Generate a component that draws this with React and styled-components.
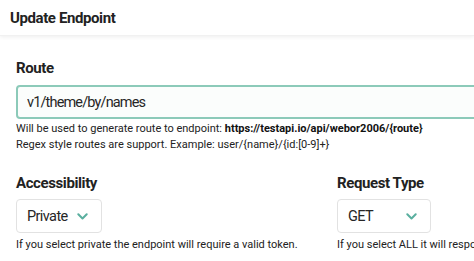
import React from "react";
import styled, { createGlobalStyle } from "styled-components";

const GlobalStyle = createGlobalStyle`
  html, body {
    margin: 0;
    padding: 0;
    background: #ffffff;
    overflow: hidden;
  }
  body {
    font-family: Roboto, "Liberation Sans", sans-serif;
    color: #1f1f1f;
  }
`;

const Page = styled.div`
  width: 474px;
  height: 261px;
  overflow: hidden;
`;

const Header = styled.header`
  height: 36px;
  display: flex;
  align-items: center;
  padding: 0 10px;
  box-shadow: 0 1px 4px rgba(0, 0, 0, 0.07);
  border-bottom: 1px solid #f1f1f1;
  box-sizing: border-box;
`;

const HeaderTitle = styled.h1`
  margin: 0;
  font-size: 15px;
  font-weight: 700;
  color: #222;
  letter-spacing: -0.4px;
`;

const Body = styled.div`
  padding: 22px 0 0 16px;
`;

const Field = styled.div`
  display: flex;
  flex-direction: column;
  margin-bottom: ${(p) => p.$gap || 0}px;
`;

const Label = styled.label`
  font-size: 15px;
  font-weight: 700;
  color: #222;
  line-height: 20px;
  letter-spacing: -0.4px;
  margin-bottom: ${(p) => p.$mb ?? 7}px;
`;

const TextInput = styled.input`
  width: 480px;
  height: 34px;
  box-sizing: border-box;
  border: 2px solid #8ccab9;
  border-radius: 4px;
  background: #fbfdfc;
  padding: 0 9px;
  font-family: inherit;
  font-size: 14.5px;
  letter-spacing: -0.85px;
  color: #262626;
  outline: none;
`;

const Help = styled.p`
  margin: 0;
  font-size: 11px;
  line-height: 16px;
  color: #222;
  white-space: nowrap;

  &:first-of-type {
    margin-top: 2px;
  }

  b {
    font-weight: 700;
    color: #111;
  }
`;

const Row = styled.div`
  display: flex;
`;

const Column = styled.div`
  width: ${(p) => p.$width || "auto"};
  flex-shrink: 0;
  display: flex;
  flex-direction: column;
`;

const Select = styled.div`
  width: ${(p) => p.$width}px;
  height: 34px;
  box-sizing: border-box;
  border: 1px solid #e2e2e2;
  border-radius: 4px;
  display: flex;
  align-items: center;
  justify-content: space-between;
  padding: 0 13px 0 10px;
  font-size: 14.5px;
  letter-spacing: -0.6px;
  color: #262626;
  margin-bottom: 2px;
`;

const Chevron = () => (
  <svg width="11" height="7" viewBox="0 0 11 7" fill="none">
    <path
      d="M1.3 1.3 L5.5 5.5 L9.7 1.3"
      stroke="#5aaf9f"
      strokeWidth="2"
      strokeLinecap="round"
      strokeLinejoin="round"
    />
  </svg>
);

export default function App() {
  return (
    <Page>
      <GlobalStyle />
      <Header>
        <HeaderTitle>Update Endpoint</HeaderTitle>
      </Header>
      <Body>
        <Field $gap={20}>
          <Label>Route</Label>
          <TextInput defaultValue="v1/theme/by/names" />
          <Help>
            Will be used to generate route to endpoint:{" "}
            <b>https://testapi.io/api/webor2006/{"{route}"}</b>
          </Help>
          <Help>Regex style routes are support. Example: user/{"{name}"}/{"{id:[0-9]+}"}</Help>
        </Field>
        <Row>
          <Column $width="321px">
            <Label $mb={6}>Accessibility</Label>
            <Select $width={86}>
              Private
              <Chevron />
            </Select>
            <Help>If you select private the endpoint will require a valid token.</Help>
          </Column>
          <Column>
            <Label $mb={6}>Request Type</Label>
            <Select $width={94}>
              GET
              <Chevron />
            </Select>
            <Help>If you select ALL it will respond to all request types.</Help>
          </Column>
        </Row>
      </Body>
    </Page>
  );
}
